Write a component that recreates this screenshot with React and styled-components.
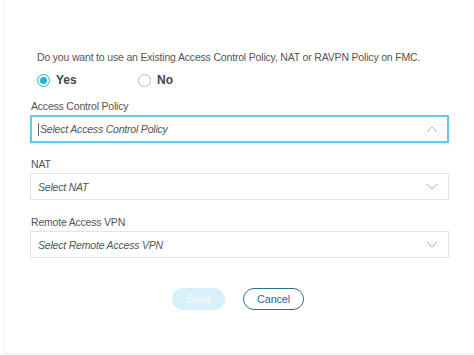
import React from "react";
import styled, { createGlobalStyle } from "styled-components";

const Global = createGlobalStyle`
  html, body { margin: 0; padding: 0; background: #fff; }
  body { font-family: "Liberation Sans", Arial, sans-serif; }
`;

const Panel = styled.div`
  box-sizing: border-box;
  margin-left: 3px;
  width: 471px;
  height: 354px;
  border-left: 1px solid #f3f3f3;
  border-bottom: 1px solid #ececec;
  padding: 50px 26px 0 26px;
  display: flex;
  flex-direction: column;
`;

const Question = styled.div`
  font-size: 10.5px;
  letter-spacing: -0.18px;
  line-height: 15px;
  color: #555;
  padding-left: 7px;
  white-space: nowrap;
`;

const RadioRow = styled.div`
  display: flex;
  padding-left: 7px;
  margin-top: 6px;
  height: 18px;
  align-items: center;
`;

const RadioOption = styled.label`
  display: flex;
  align-items: center;
  width: ${(p) => p.$w}px;
  font-size: 12px;
  font-weight: bold;
  color: #444;
  gap: 6px;
`;

const Circle = styled.span`
  box-sizing: border-box;
  width: 13px;
  height: 13px;
  border-radius: 50%;
  border: 1px solid ${(p) => (p.$checked ? "#1fb3d6" : "#bbb")};
  display: flex;
  align-items: center;
  justify-content: center;
  &::after {
    content: "";
    display: ${(p) => (p.$checked ? "block" : "none")};
    width: 7px;
    height: 7px;
    border-radius: 50%;
    background: #1fb3d6;
  }
`;

const Field = styled.div`
  display: flex;
  flex-direction: column;
  margin-top: ${(p) => p.$mt}px;
`;

const Label = styled.div`
  font-size: 10.5px;
  letter-spacing: -0.2px;
  line-height: 12px;
  color: #555;
  margin-bottom: 3px;
  padding-left: 1px;
`;

const SelectBox = styled.div`
  box-sizing: border-box;
  height: ${(p) => (p.$focus ? 28 : 27)}px;
  width: 419px;
  border: ${(p) => (p.$focus ? "2px solid #66c8e6" : "1px solid #e4e4e4")};
  box-shadow: ${(p) => (p.$focus ? "0 1px 2px rgba(90,190,225,0.35)" : "none")};
  display: flex;
  align-items: center;
  justify-content: space-between;
  padding: 0 ${(p) => (p.$focus ? 9 : 10)}px 0 ${(p) => (p.$focus ? 6 : 7)}px;
`;

const Placeholder = styled.span`
  font-size: 10.5px;
  letter-spacing: -0.2px;
  font-style: italic;
  color: #555;
  display: flex;
  align-items: center;
`;

const Caret = styled.span`
  display: inline-block;
  width: 1px;
  height: 13px;
  background: #666;
  margin-right: 1px;
`;

const Buttons = styled.div`
  display: flex;
  justify-content: center;
  gap: 18px;
  margin-top: 30px;
  padding-right: 2px;
`;

const Button = styled.button`
  box-sizing: border-box;
  height: 22px;
  width: ${(p) => p.$w}px;
  border-radius: 11px;
  font-family: "Liberation Sans", Arial, sans-serif;
  font-size: 11px;
  letter-spacing: -0.2px;
  padding: 0;
  border: ${(p) => (p.$primary ? "none" : "1px solid #2a6d8f")};
  background: ${(p) => (p.$primary ? "#d8f0fb" : "#fff")};
  color: ${(p) => (p.$primary ? "#fff" : "#2a6d8f")};
`;

const Chevron = ({ up }) => (
  <svg width="12" height="7" viewBox="0 0 12 7">
    <path
      d={up ? "M1 6 L6 1 L11 6" : "M1 1 L6 6 L11 1"}
      fill="none"
      stroke="#aaa"
      strokeWidth="1"
    />
  </svg>
);

export default function App() {
  return (
    <>
      <Global />
      <Panel>
        <Question>
          Do you want to use an Existing Access Control Policy, NAT or RAVPN Policy on FMC.
        </Question>
        <RadioRow>
          <RadioOption $w={101}>
            <Circle $checked />
            Yes
          </RadioOption>
          <RadioOption $w={60}>
            <Circle />
            No
          </RadioOption>
        </RadioRow>
        <Field $mt={11}>
          <Label>Access Control Policy</Label>
          <SelectBox $focus>
            <Placeholder>
              <Caret />
              Select Access Control Policy
            </Placeholder>
            <Chevron up />
          </SelectBox>
        </Field>
        <Field $mt={15}>
          <Label>NAT</Label>
          <SelectBox>
            <Placeholder>Select NAT</Placeholder>
            <Chevron />
          </SelectBox>
        </Field>
        <Field $mt={16}>
          <Label>Remote Access VPN</Label>
          <SelectBox>
            <Placeholder>Select Remote Access VPN</Placeholder>
            <Chevron />
          </SelectBox>
        </Field>
        <Buttons>
          <Button $primary $w={53}>Save</Button>
          <Button $w={61}>Cancel</Button>
        </Buttons>
      </Panel>
    </>
  );
}
